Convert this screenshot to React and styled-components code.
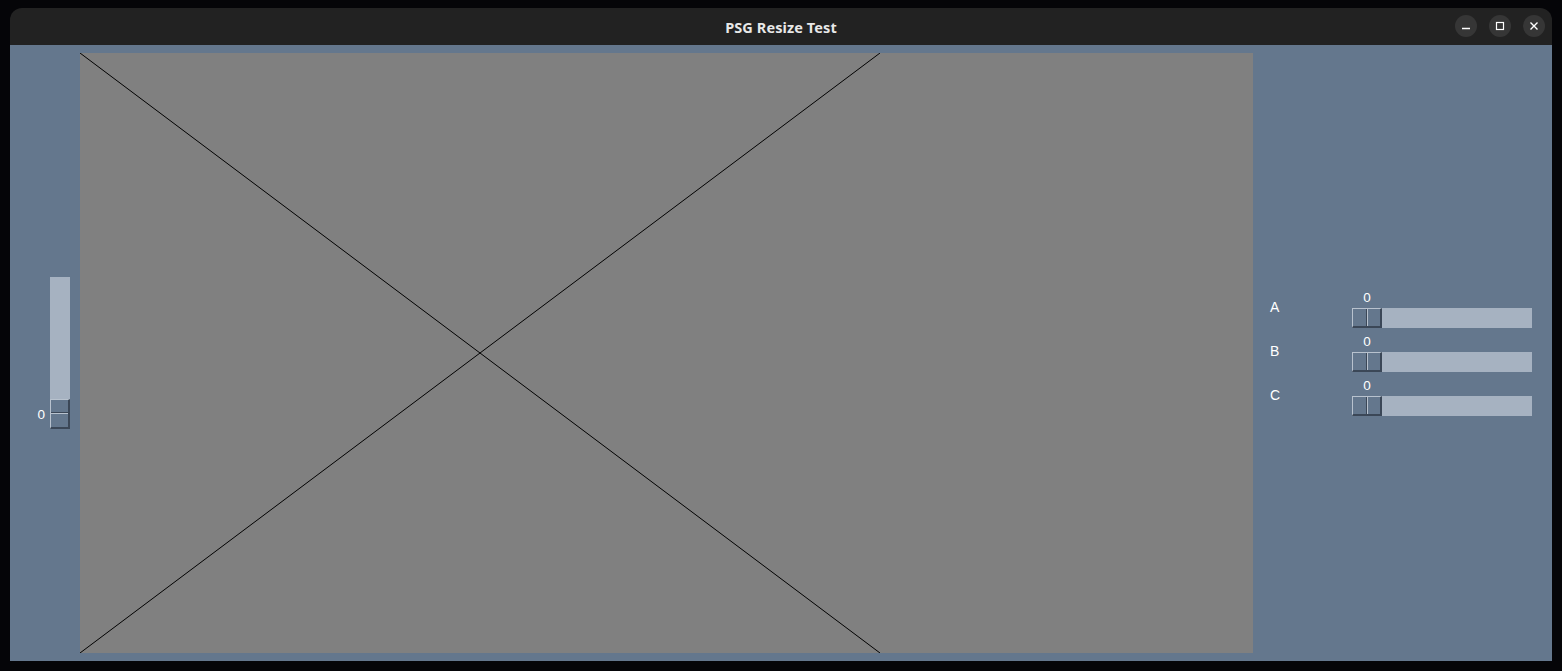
import React from "react";
import styled, { createGlobalStyle } from "styled-components";

const Global = createGlobalStyle`
  html, body { margin: 0; padding: 0; background: #050508; }
  body { width: 1562px; height: 671px; overflow: hidden; font-family: "Liberation Sans", Arial, sans-serif; }
`;

const Screen = styled.div`
  width: 1562px;
  height: 671px;
  padding: 8px 10px 10px 10px;
  box-sizing: border-box;
`;

const Window = styled.div`
  width: 1542px;
  height: 653px;
  display: flex;
  flex-direction: column;
  border-radius: 12px 12px 0 0;
  overflow: hidden;
`;

const TitleBar = styled.div`
  height: 37px;
  flex: none;
  background: #222222;
  position: relative;
  display: flex;
  align-items: center;
  justify-content: center;
`;

const Title = styled.div`
  color: #e8e8e8;
  font-family: "Noto Sans", "DejaVu Sans", sans-serif;
  font-weight: 700;
  font-size: 14.5px;
  letter-spacing: 0.1px;
`;

const Controls = styled.div`
  position: absolute;
  right: 7px;
  top: 7px;
  display: flex;
  gap: 12px;
`;

const CtlButton = styled.div`
  width: 22px;
  height: 22px;
  border-radius: 50%;
  background: #363636;
  display: flex;
  align-items: center;
  justify-content: center;
`;

const Body = styled.div`
  flex: 1;
  background: #64778d;
  display: flex;
  padding: 8px 20px 8px 0;
`;

const LeftCol = styled.div`
  width: 70px;
  flex: none;
  display: flex;
  align-items: center;
  justify-content: flex-end;
  padding-right: 10px;
  box-sizing: border-box;
`;

const VTrough = styled.div`
  position: relative;
  width: 20px;
  height: 152px;
  background: #a6b2c1;
  display: flex;
  flex-direction: column;
  justify-content: flex-end;
`;

const VThumb = styled.div`
  position: relative;
  height: 30px;
  box-sizing: border-box;
  background: #64778d;
  border-top: 1px solid #b8c2ce;
  border-left: 1px solid #b8c2ce;
  border-bottom: 2px solid #3b4757;
  border-right: 2px solid #3b4757;
  &::after {
    content: "";
    position: absolute;
    left: 0;
    right: 0;
    top: 13px;
    height: 1px;
    background: #b8c2ce;
    box-shadow: 0 -1px 0 #3b4757;
  }
`;

const VValue = styled.div`
  position: absolute;
  right: 23px;
  bottom: 4px;
  color: #ffffff;
  font-size: 13.5px;
  line-height: 16px;
`;

const Canvas = styled.div`
  width: 1173px;
  height: 600px;
  flex: none;
  background: #808080;
`;

const RightPanel = styled.div`
  flex: 1;
  display: flex;
  flex-direction: column;
  justify-content: center;
  padding-left: 17px;
  padding-top: 3px;
`;

const Row = styled.div`
  height: 44px;
  display: flex;
`;

const Label = styled.div`
  width: 82px;
  flex: none;
  margin-top: 10px;
  color: #ffffff;
  font-size: 14px;
  line-height: 16px;
`;

const SliderWrap = styled.div`
  width: 180px;
  display: flex;
  flex-direction: column;
`;

const HValue = styled.div`
  width: 30px;
  text-align: center;
  color: #ffffff;
  font-size: 13.5px;
  line-height: 16px;
  margin-top: 1px;
  height: 16px;
`;

const HTrough = styled.div`
  margin-top: 2px;
  height: 20px;
  background: #a6b2c1;
  display: flex;
`;

const HThumb = styled.div`
  position: relative;
  width: 30px;
  box-sizing: border-box;
  background: #64778d;
  border-top: 1px solid #b8c2ce;
  border-left: 1px solid #b8c2ce;
  border-bottom: 2px solid #3b4757;
  border-right: 2px solid #3b4757;
  &::after {
    content: "";
    position: absolute;
    top: 0;
    bottom: 0;
    left: 14px;
    width: 1px;
    background: #b8c2ce;
    box-shadow: -1px 0 0 #3b4757;
  }
`;

function HSlider({ label, value }) {
  return (
    <Row>
      <Label>{label}</Label>
      <SliderWrap>
        <HValue>{value}</HValue>
        <HTrough>
          <HThumb />
        </HTrough>
      </SliderWrap>
    </Row>
  );
}

export default function App() {
  return (
    <>
      <Global />
      <Screen>
        <Window>
          <TitleBar>
            <Title>PSG Resize Test</Title>
            <Controls>
              <CtlButton>
                <svg width="10" height="10" viewBox="0 0 10 10">
                  <line x1="1" y1="7.5" x2="9" y2="7.5" stroke="#fff" strokeWidth="1.3" />
                </svg>
              </CtlButton>
              <CtlButton>
                <svg width="10" height="10" viewBox="0 0 10 10">
                  <rect x="1.5" y="1.5" width="7" height="7" fill="none" stroke="#fff" strokeWidth="1.2" />
                </svg>
              </CtlButton>
              <CtlButton>
                <svg width="10" height="10" viewBox="0 0 10 10">
                  <path d="M1.5 1.5 L8.5 8.5 M8.5 1.5 L1.5 8.5" stroke="#fff" strokeWidth="1.4" />
                </svg>
              </CtlButton>
            </Controls>
          </TitleBar>
          <Body>
            <LeftCol>
              <VTrough>
                <VThumb>
                  <VValue>0</VValue>
                </VThumb>
              </VTrough>
            </LeftCol>
            <Canvas>
              <svg width="1173" height="600" viewBox="0 0 1173 600">
                <line x1="0" y1="0" x2="800" y2="600" stroke="#000" strokeWidth="1" />
                <line x1="800" y1="0" x2="0" y2="600" stroke="#000" strokeWidth="1" />
              </svg>
            </Canvas>
            <RightPanel>
              <HSlider label="A" value="0" />
              <HSlider label="B" value="0" />
              <HSlider label="C" value="0" />
            </RightPanel>
          </Body>
        </Window>
      </Screen>
    </>
  );
}
